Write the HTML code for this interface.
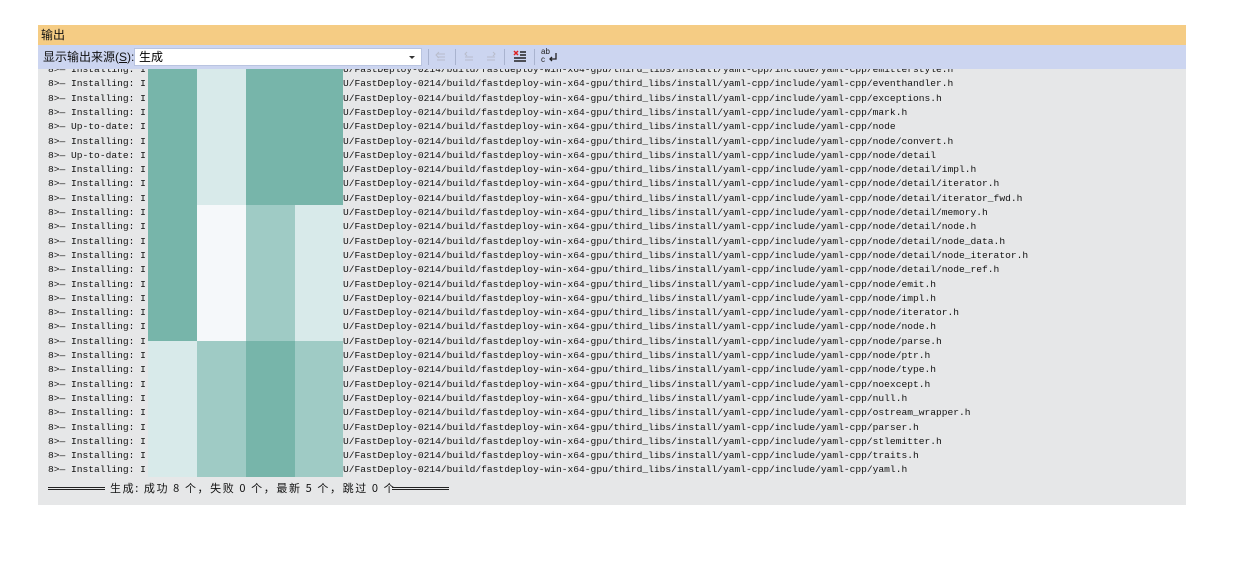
<!DOCTYPE html>
<html><head><meta charset="utf-8"><style>
body{margin:0;width:1245px;height:572px;background:#fff;position:relative;overflow:hidden;font-family:"Liberation Sans","Noto Sans CJK SC",sans-serif}
#panel{position:absolute;left:38px;top:25px;width:1148px;height:480px;background:#e6e7e8}
#title{position:absolute;left:0;top:0;width:1148px;height:20px;background:#f5cc84;font-size:12px;line-height:20px;padding-left:3px;box-sizing:border-box;color:#111}
#tb{position:absolute;left:0;top:20px;width:1148px;height:24px;background:#ccd5f0}
#lbl{position:absolute;left:5px;top:3px;font-size:12px;line-height:18px;color:#111}
#combo{position:absolute;left:96px;top:3px;width:288px;height:18px;background:#fff;border:1px solid #b9c4e0;box-sizing:border-box;font-size:12px;line-height:16px;padding-left:4px}
#combo:after{content:"";position:absolute;right:6px;top:7px;border:3px solid transparent;border-top:3px solid #333}
.sep{position:absolute;top:4px;width:1px;height:16px;background:#a9b3cf}
#content{position:absolute;left:0;top:44px;width:1148px;height:436px;overflow:hidden}
.ln{position:absolute;font-family:"Liberation Mono","Noto Sans CJK SC",monospace;font-size:9.6px;color:#111;white-space:pre;height:14px;line-height:14px}
.m{position:absolute}
.dl{position:absolute;height:1px;border-top:1px solid #222;border-bottom:1px solid #222}
</style></head><body>
<div id="panel">
<div id="title">输出</div>
<div id="tb">
<div id="lbl">显示输出来源(<u>S</u>):</div>
<div id="combo">生成</div>
<div class="sep" style="left:390px"></div>
<svg style="position:absolute;left:396px;top:4px" width="14" height="16"><path d="M3 5h8M3 8h8M3 11h8M5 3l-3 3 3 3" stroke="#b8bccb" fill="none"/></svg>
<div class="sep" style="left:417px"></div>
<svg style="position:absolute;left:424px;top:4px" width="14" height="16"><path d="M3 8h8M3 11h8M5 3l-2 2 2 2" stroke="#b8bccb" fill="none"/></svg>
<svg style="position:absolute;left:446px;top:4px" width="14" height="16"><path d="M3 8h8M3 11h8M9 3l2 2-2 2" stroke="#b8bccb" fill="none"/></svg>
<div class="sep" style="left:466px"></div>
<svg style="position:absolute;left:474px;top:4px" width="16" height="16"><path d="M2 2l4 4M6 2l-4 4" stroke="#d22" stroke-width="1.5"/><path d="M8 3h6M8 6h6M2 9h12M2 12h12" stroke="#222" stroke-width="1.5"/></svg>
<div class="sep" style="left:496px"></div>
<div style="position:absolute;left:503px;top:3px;font-size:8px;line-height:8px;color:#222">ab<br>c</div>
<svg style="position:absolute;left:505px;top:4px" width="16" height="16"><path d="M13 4v6H7M9 8l-2 2 2 2" stroke="#222" fill="none" stroke-width="1.3"/></svg>
</div>
<div id="content">
<div class="m" style="left:110px;top:0;width:49px;height:136px;background:#77b5aa"></div>
<div class="m" style="left:159px;top:0;width:49px;height:136px;background:#d8eaea"></div>
<div class="m" style="left:208px;top:0;width:97px;height:136px;background:#77b5aa"></div>
<div class="m" style="left:110px;top:136px;width:49px;height:136px;background:#77b5aa"></div>
<div class="m" style="left:159px;top:136px;width:49px;height:136px;background:#f5f8fa"></div>
<div class="m" style="left:208px;top:136px;width:49px;height:136px;background:#9fcbc5"></div>
<div class="m" style="left:257px;top:136px;width:48px;height:136px;background:#d8eaea"></div>
<div class="m" style="left:110px;top:272px;width:49px;height:136px;background:#d8eaea"></div>
<div class="m" style="left:159px;top:272px;width:49px;height:136px;background:#9fcbc5"></div>
<div class="m" style="left:208px;top:272px;width:49px;height:136px;background:#77b5aa"></div>
<div class="m" style="left:257px;top:272px;width:48px;height:136px;background:#9fcbc5"></div>
<div id="lines"></div>
<div class="dl" style="left:10px;top:418px;width:57px"></div>
<div class="ln" style="left:72px;top:412px;font-family:'Noto Sans CJK SC',sans-serif;font-size:11px;letter-spacing:1.6px">生成: 成功 8 个，失败 0 个，最新 5 个，跳过 0 个</div>
<div class="dl" style="left:354px;top:418px;width:57px"></div>
</div>
</div>
<script>
var f=["emitterstyle.h","eventhandler.h","exceptions.h","mark.h","node","node/convert.h","node/detail","node/detail/impl.h","node/detail/iterator.h","node/detail/iterator_fwd.h","node/detail/memory.h","node/detail/node.h","node/detail/node_data.h","node/detail/node_iterator.h","node/detail/node_ref.h","node/emit.h","node/impl.h","node/iterator.h","node/node.h","node/parse.h","node/ptr.h","node/type.h","noexcept.h","null.h","ostream_wrapper.h","parser.h","stlemitter.h","traits.h","yaml.h"];
var h="",c=document.getElementById("content");
for(var i=0;i<f.length;i++){var t=-6+i*14.3;var up=(f[i]=="node"||f[i]=="node/detail");
h+='<div class="ln" style="left:10px;top:'+t+'px">8>— '+(up?'Up-to-date:':'Installing:')+' I</div>';
h+='<div class="ln" style="left:305px;top:'+t+'px">U/FastDeploy-0214/build/fastdeploy-win-x64-gpu/third_libs/install/yaml-cpp/include/yaml-cpp/'+f[i]+'</div>';}
c.insertAdjacentHTML("afterbegin",h);
</script>
</body></html>
